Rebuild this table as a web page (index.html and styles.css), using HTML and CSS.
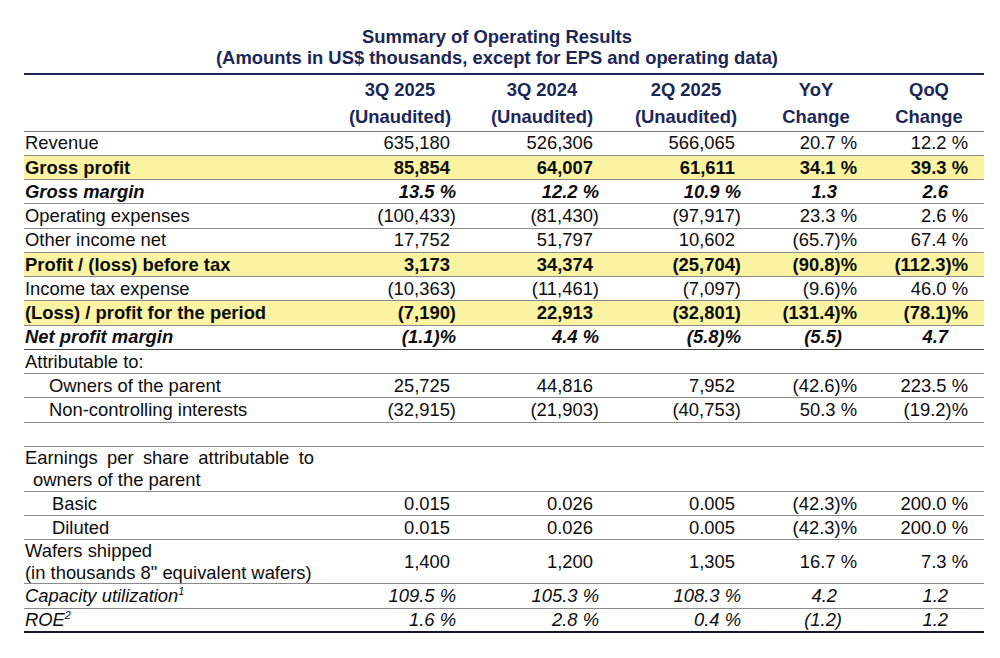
FILE: index.html
```html
<!DOCTYPE html>
<html lang="en">
<head>
<meta charset="utf-8">
<title>Summary of Operating Results</title>
<link rel="stylesheet" href="styles.css">
</head>
<body>
<div class="page">
  <div class="title">
    <div>Summary of Operating Results</div>
    <div>(Amounts in US$ thousands, except for EPS and operating data)</div>
  </div>
  <table class="results">
    <colgroup>
      <col class="c-label"><col class="c1"><col class="c2"><col class="c3"><col class="c4"><col class="c5">
    </colgroup>
    <thead>
      <tr>
        <th></th>
        <th>3Q 2025<br>(Unaudited)</th>
        <th>3Q 2024<br>(Unaudited)</th>
        <th>2Q 2025<br>(Unaudited)</th>
        <th>YoY<br>Change</th>
        <th>QoQ<br>Change</th>
      </tr>
    </thead>
    <tbody>
      <tr class="r">
        <td class="lbl">Revenue</td>
        <td class="num u">635,180</td><td class="num u">526,306</td><td class="num u">566,065</td><td class="num">20.7 %</td><td class="num">12.2 %</td>
      </tr>
      <tr class="r hl">
        <td class="lbl">Gross profit</td>
        <td class="num u">85,854</td><td class="num u">64,007</td><td class="num u">61,611</td><td class="num">34.1 %</td><td class="num">39.3 %</td>
      </tr>
      <tr class="r bi">
        <td class="lbl">Gross margin</td>
        <td class="num">13.5 %</td><td class="num">12.2 %</td><td class="num">10.9 %</td><td class="num v">1.3</td><td class="num v">2.6</td>
      </tr>
      <tr class="r">
        <td class="lbl">Operating expenses</td>
        <td class="num">(100,433)</td><td class="num">(81,430)</td><td class="num">(97,917)</td><td class="num">23.3 %</td><td class="num">2.6 %</td>
      </tr>
      <tr class="r">
        <td class="lbl">Other income net</td>
        <td class="num u">17,752</td><td class="num u">51,797</td><td class="num u">10,602</td><td class="num">(65.7)%</td><td class="num">67.4 %</td>
      </tr>
      <tr class="r hl">
        <td class="lbl">Profit / (loss) before tax</td>
        <td class="num u">3,173</td><td class="num u">34,374</td><td class="num">(25,704)</td><td class="num">(90.8)%</td><td class="num">(112.3)%</td>
      </tr>
      <tr class="r">
        <td class="lbl">Income tax expense</td>
        <td class="num">(10,363)</td><td class="num">(11,461)</td><td class="num">(7,097)</td><td class="num">(9.6)%</td><td class="num">46.0 %</td>
      </tr>
      <tr class="r hl">
        <td class="lbl">(Loss) / profit for the period</td>
        <td class="num">(7,190)</td><td class="num u">22,913</td><td class="num">(32,801)</td><td class="num">(131.4)%</td><td class="num">(78.1)%</td>
      </tr>
      <tr class="r bi dark">
        <td class="lbl">Net profit margin</td>
        <td class="num">(1.1)%</td><td class="num">4.4 %</td><td class="num">(5.8)%</td><td class="num w">(5.5)</td><td class="num v">4.7</td>
      </tr>
      <tr class="r">
        <td class="lbl">Attributable to:</td>
        <td></td><td></td><td></td><td></td><td></td>
      </tr>
      <tr class="r">
        <td class="lbl ind1">Owners of the parent</td>
        <td class="num u">25,725</td><td class="num u">44,816</td><td class="num u">7,952</td><td class="num">(42.6)%</td><td class="num">223.5 %</td>
      </tr>
      <tr class="r">
        <td class="lbl ind1">Non-controlling interests</td>
        <td class="num">(32,915)</td><td class="num">(21,903)</td><td class="num">(40,753)</td><td class="num">50.3 %</td><td class="num">(19.2)%</td>
      </tr>
      <tr class="r">
        <td></td><td></td><td></td><td></td><td></td><td></td>
      </tr>
      <tr class="r2 eps">
        <td class="lbl">
          <div class="just">Earnings per share attributable to</div>
          <div class="sub">owners of the parent</div>
        </td>
        <td></td><td></td><td></td><td></td><td></td>
      </tr>
      <tr class="r">
        <td class="lbl ind2">Basic</td>
        <td class="num u">0.015</td><td class="num u">0.026</td><td class="num u">0.005</td><td class="num">(42.3)%</td><td class="num">200.0 %</td>
      </tr>
      <tr class="r">
        <td class="lbl ind2">Diluted</td>
        <td class="num u">0.015</td><td class="num u">0.026</td><td class="num u">0.005</td><td class="num">(42.3)%</td><td class="num">200.0 %</td>
      </tr>
      <tr class="r3">
        <td class="lbl">Wafers shipped<br>(in thousands 8&quot; equivalent wafers)</td>
        <td class="num u">1,400</td><td class="num u">1,200</td><td class="num u">1,305</td><td class="num">16.7 %</td><td class="num">7.3 %</td>
      </tr>
      <tr class="r it">
        <td class="lbl">Capacity utilization<sup>1</sup></td>
        <td class="num">109.5 %</td><td class="num">105.3 %</td><td class="num">108.3 %</td><td class="num v">4.2</td><td class="num v">1.2</td>
      </tr>
      <tr class="r it last">
        <td class="lbl">ROE<sup>2</sup></td>
        <td class="num">1.6 %</td><td class="num">2.8 %</td><td class="num">0.4 %</td><td class="num w">(1.2)</td><td class="num v">1.2</td>
      </tr>
    </tbody>
  </table>
</div>
</body>
</html>
```

FILE: styles.css
```css
body {
  margin: 0;
  background: #ffffff;
  font-family: "Liberation Sans", Arial, sans-serif;
  color: #0d0d0d;
}

.page {
  width: 960px;
  padding: 26px 16px 0 24px;
}

.title {
  margin-right: 14px;
  text-align: center;
  color: #1c2757;
  font-weight: bold;
  font-size: 18.4px;
  line-height: 21px;
}

.results {
  margin-top: 5px;
  width: 960px;
  border-collapse: collapse;
  table-layout: fixed;
  font-size: 18.4px;
  line-height: 21.5px;
}

.c-label { width: 306px; }
.c1 { width: 140px; }
.c2 { width: 144px; }
.c3 { width: 144px; }
.c4 { width: 116px; }
.c5 { width: 110px; }

.results thead tr { height: 57px; }

.results th {
  padding: 0;
  color: #1c2757;
  font-weight: bold;
  line-height: 27px;
  text-align: center;
  vertical-align: middle;
  border-top: 2px solid #1c2757;
  border-bottom: 1px solid #7c7c7c;
}

.results td {
  padding: 0;
  vertical-align: middle;
  border-top: 1px solid #8a8a8a;
  white-space: nowrap;
}

.results tr.r { height: 24.25px; }
.results tr.r2 { height: 45px; }
.results tr.r3 { height: 44px; }

.results tr.dark td { border-bottom: 1px solid #444444; }

.results td:nth-child(2) { --pr: 14px; }
.results td:nth-child(3) { --pr: 15px; }
.results td:nth-child(4) { --pr: 17px; }
.results td:nth-child(5) { --pr: 17px; }
.results td:nth-child(6) { --pr: 16px; }

.results td.num {
  text-align: right;
  padding-right: var(--pr);
}
.results td.num.u { padding-right: calc(var(--pr) + 6px); }
.results td.num.v { padding-right: calc(var(--pr) + 20px); }
.results td.num.w { padding-right: calc(var(--pr) + 15px); }

.results td.lbl { padding-left: 1px; }
.results td.ind1 { padding-left: 25px; }
.results td.ind2 { padding-left: 28px; }

.results tr.hl td {
  background: #faf4a2;
  font-weight: bold;
}

.results tr.bi td {
  font-weight: bold;
  font-style: italic;
}

.results tr.it td { font-style: italic; }

.results tr.last td { border-bottom: 2px solid #15182a; }

.just {
  width: 289px;
  text-align: justify;
  text-align-last: justify;
}

.sub { padding-left: 8px; }

sup {
  font-size: 11px;
  line-height: 0;
  vertical-align: 7px;
}
```
